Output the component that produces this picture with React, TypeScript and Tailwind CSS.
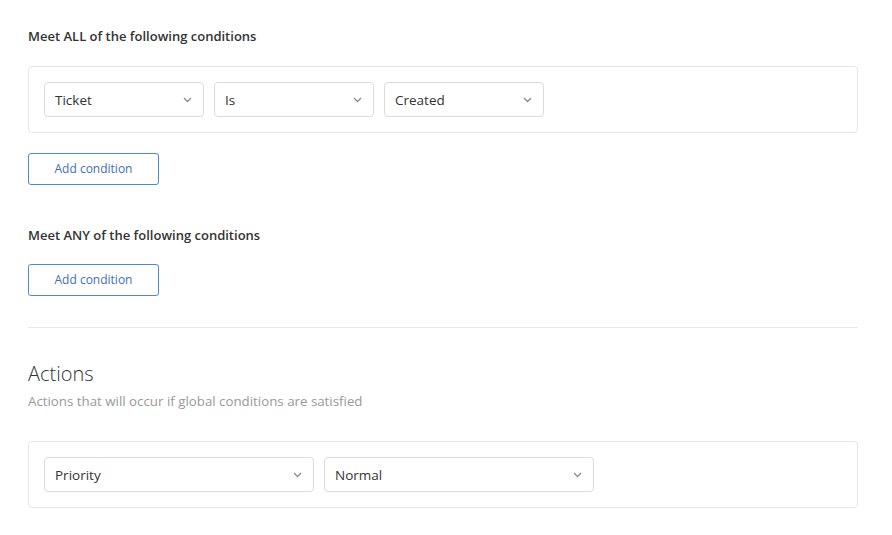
import React from 'react';

const Chevron: React.FC = () => (
  <svg width="9" height="6" viewBox="0 0 9 6" fill="none" className="shrink-0">
    <path d="M1 1l3.5 3.5L8 1" stroke="#8a8a8a" strokeWidth="1.3" />
  </svg>
);

const Select: React.FC<{ value: string; width: string }> = ({ value, width }) => (
  <div
    className={`${width} h-[35px] flex items-center justify-between pl-[10px] pr-[11px] border border-[#dcdcdc] rounded-[4px] bg-white text-[13.5px] text-[#333]`}
  >
    <span className="pt-[1px]">{value}</span>
    <Chevron />
  </div>
);

const AddButton: React.FC = () => (
  <button className="w-[131px] h-[32px] border border-[#4a8bd1] rounded-[3px] text-[12px] text-[#3d6fb3] bg-white">
    Add condition
  </button>
);

const App: React.FC = () => {
  return (
    <div
      className="w-[892px] h-[535px] bg-white px-[28px] pt-[28px] text-[#333]"
      style={{ fontFamily: '"Segoe UI", "Open Sans", sans-serif' }}
    >
      <div className="w-[830px]">
        <h3 className="text-[13px] font-semibold text-[#333] leading-[17px]">Meet ALL of the following conditions</h3>

        <div className="mt-[21px] border border-[#e6e6e6] rounded-[4px] p-[15px] flex gap-[10px]">
          <Select value="Ticket" width="w-[160px]" />
          <Select value="Is" width="w-[160px]" />
          <Select value="Created" width="w-[160px]" />
        </div>

        <div className="mt-[20px]">
          <AddButton />
        </div>

        <h3 className="mt-[42px] text-[13px] font-semibold text-[#333] leading-[17px]">Meet ANY of the following conditions</h3>

        <div className="mt-[20px]">
          <AddButton />
        </div>

        <div className="mt-[31px] border-t border-[#e8e8e8]" />

        <h2 className="mt-[33px] text-[20px] font-light text-[#333] leading-[26px]">Actions</h2>
        <p className="mt-[5px] text-[13.3px] text-[#999] leading-[18px]">Actions that will occur if global conditions are satisfied</p>

        <div className="mt-[31px] border border-[#e6e6e6] rounded-[4px] p-[15px] flex gap-[10px]">
          <Select value="Priority" width="w-[270px]" />
          <Select value="Normal" width="w-[270px]" />
        </div>
      </div>
    </div>
  );
};

export default App;
